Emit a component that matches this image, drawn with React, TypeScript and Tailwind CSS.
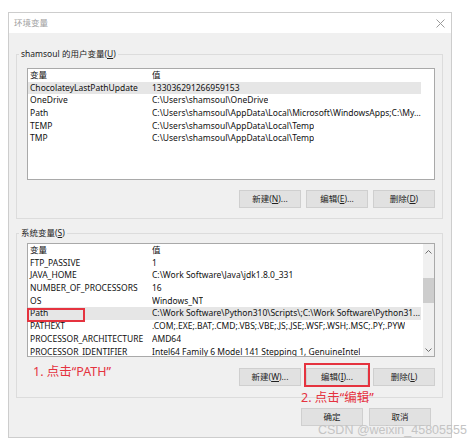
import React from "react";

const K = ({ k }: { k: string }) => <span className="underline">{k}</span>;

function Btn({ children }: { children: React.ReactNode }) {
  return (
    <div className="w-[62px] h-[18px] flex items-center justify-center bg-[#e1e1e1] border border-[#cfcfcf] text-[8.5px] leading-none text-[#222]">
      {children}
    </div>
  );
}

function Row({ name, value, sel }: { name: string; value: string; sel?: boolean }) {
  return (
    <div className={`flex w-[393px] h-[12.7px] leading-[12.7px] items-center ${sel ? "bg-[#e6e6e6]" : ""}`}>
      <div className="w-[124px] pl-[2px] shrink-0 whitespace-nowrap overflow-hidden">{name}</div>
      <div className="whitespace-nowrap overflow-hidden">{value}</div>
    </div>
  );
}

function Chevron({ up }: { up?: boolean }) {
  return (
    <svg width="7" height="4" viewBox="0 0 7 4" className="block">
      <path
        d={up ? "M0.5 3.5 L3.5 0.5 L6.5 3.5" : "M0.5 0.5 L3.5 3.5 L6.5 0.5"}
        fill="none"
        stroke="#707070"
        strokeWidth="1"
      />
    </svg>
  );
}

const userVars: [string, string, boolean?][] = [
  ["ChocolateyLastPathUpdate", "133036291266959153", true],
  ["OneDrive", "C:\\Users\\shamsoul\\OneDrive"],
  ["Path", "C:\\Users\\shamsoul\\AppData\\Local\\Microsoft\\WindowsApps;C:\\My..."],
  ["TEMP", "C:\\Users\\shamsoul\\AppData\\Local\\Temp"],
  ["TMP", "C:\\Users\\shamsoul\\AppData\\Local\\Temp"],
];

const sysVars: [string, string, boolean?][] = [
  ["FTP_PASSIVE", "1"],
  ["JAVA_HOME", "C:\\Work Software\\Java\\jdk1.8.0_331"],
  ["NUMBER_OF_PROCESSORS", "16"],
  ["OS", "Windows_NT"],
  ["Path", "C:\\Work Software\\Python310\\Scripts\\;C:\\Work Software\\Python31...", true],
  ["PATHEXT", ".COM;.EXE;.BAT;.CMD;.VBS;.VBE;.JS;.JSE;.WSF;.WSH;.MSC;.PY;.PYW"],
  ["PROCESSOR_ARCHITECTURE", "AMD64"],
  ["PROCESSOR_IDENTIFIER", "Intel64 Family 6 Model 141 Stepping 1, GenuineIntel"],
];

export default function App() {
  return (
    <div className="relative w-[474px] h-[443px] bg-white overflow-hidden font-['Noto_Sans','Noto_Sans_CJK_SC',sans-serif] text-[#111]">
      <div className="mt-[12px] ml-[8px] w-[444px] h-[426px] border border-[#cdcdcd] flex flex-col">
        {/* title bar */}
        <div className="h-[20px] bg-white flex items-center justify-between pl-[5px] pr-[6px]">
          <span className="text-[8.5px] text-[#a0a0a0]">环境变量</span>
          <svg width="9" height="9" viewBox="0 0 9 9">
            <path d="M0.5 0.5 L8.5 8.5 M8.5 0.5 L0.5 8.5" stroke="#9a9a9a" strokeWidth="1" />
          </svg>
        </div>
        {/* content */}
        <div className="flex-1 bg-[#f0f0f0] pl-[7px] pr-[8px] pt-[14px] flex flex-col">
          {/* user vars group */}
          <fieldset className="border border-[#dcdcdc] h-[172px]">
            <legend className="ml-[2px] px-[2px] text-[8.5px] leading-[14px] text-[#222]">
              shamsoul 的用户变量(<K k="U" />)
            </legend>
            <div className="pl-[10px] pr-[7px] pt-[7px] flex flex-col">
              <div className="h-[112px] border border-[#a9a9a9] bg-white text-[8.5px] overflow-hidden">
                <Row name="变量" value="值" />
                {userVars.map(([n, v, s]) => (
                  <Row key={n} name={n} value={v} sel={s} />
                ))}
              </div>
              <div className="mt-[10px] flex justify-end gap-[5px]">
                <Btn>新建(<K k="N" />)...</Btn>
                <Btn>编辑(<K k="E" />)...</Btn>
                <Btn>删除(<K k="D" />)</Btn>
              </div>
            </div>
          </fieldset>

          {/* system vars group */}
          <fieldset className="mt-[7px] border border-[#dcdcdc] h-[172px]">
            <legend className="ml-[2px] px-[2px] text-[8.5px] leading-[14px] text-[#222]">
              系统变量(<K k="S" />)
            </legend>
            <div className="pl-[10px] pr-[7px] pt-[3px] flex flex-col">
              <div className="relative h-[114px] border border-[#a9a9a9] bg-white text-[8.5px] flex">
                <div className="flex-1 overflow-hidden">
                  <Row name="变量" value="值" />
                  {sysVars.map(([n, v, s]) => (
                    <Row key={n} name={n} value={v} sel={s} />
                  ))}
                </div>
                <div className="w-[11px] ml-[1px] bg-[#f0f0f0] flex flex-col items-center">
                  <div className="h-[16px] flex items-center justify-center">
                    <Chevron up />
                  </div>
                  <div className="h-[18px]" />
                  <div className="w-full h-[25px] bg-[#cdcdcd]" />
                  <div className="flex-1" />
                  <div className="h-[12px] flex items-center justify-center">
                    <Chevron />
                  </div>
                </div>
                <div className="absolute left-[-1px] top-[64px] w-[58px] h-[14px] border-2 border-[#e5333f]" />
              </div>
              <div className="mt-[11px] flex items-start justify-between">
                <span className="ml-[6px] -mt-[3px] text-[12.5px] leading-[14px] text-[#e5333f]">
                  1. 点击“PATH”
                </span>
                <div className="flex gap-[5px] h-[17px]">
                  <Btn>新建(<K k="W" />)...</Btn>
                  <div className="relative">
                    <Btn>编辑(<K k="I" />)...</Btn>
                    <div className="absolute -left-[2px] -top-[5px] w-[66px] h-[24px] border-2 border-[#e5333f]" />
                    <span className="absolute -left-[5px] top-[23px] whitespace-nowrap text-[12.5px] leading-[14px] text-[#e5333f]">
                      2. 点击“编辑”
                    </span>
                  </div>
                  <Btn>删除(<K k="L" />)</Btn>
                </div>
              </div>
            </div>
          </fieldset>

          <div className="mt-[10px] flex justify-end gap-[6px] pr-[12px]">
            <Btn>确定</Btn>
            <Btn>取消</Btn>
          </div>
        </div>
      </div>
      <span className="absolute left-[318px] top-[422px] whitespace-nowrap text-[12.5px] leading-[16px] text-[#c4c4c4] font-['Liberation_Sans',sans-serif]">
        CSDN @weixin_45805555
      </span>
    </div>
  );
}
